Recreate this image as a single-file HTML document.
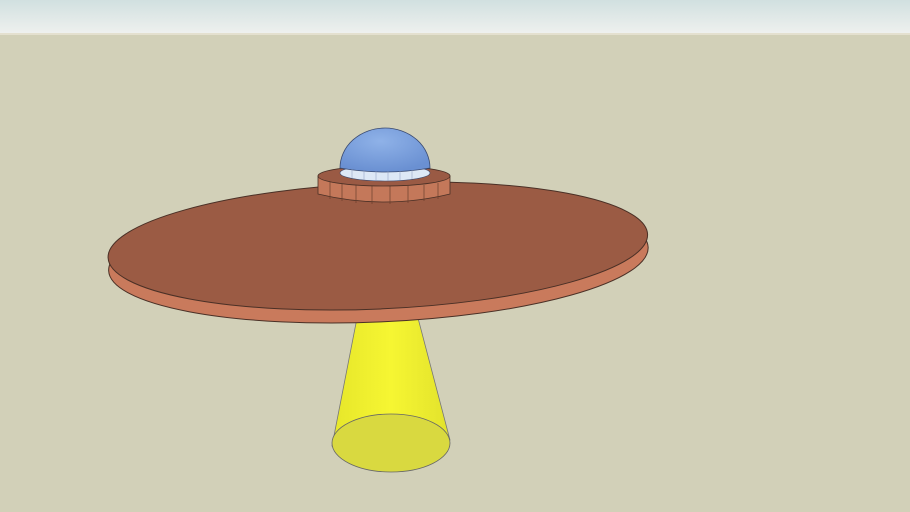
<!DOCTYPE html>
<html><head><style>
html,body{margin:0;padding:0;width:910px;height:512px;overflow:hidden;background:#d2d0b8}
svg{display:block}
</style></head><body>
<svg width="910" height="512" viewBox="0 0 910 512" xmlns="http://www.w3.org/2000/svg">
<defs>
<linearGradient id="sky" x1="0" y1="0" x2="0" y2="1">
<stop offset="0" stop-color="#d1e0e0"/><stop offset="1" stop-color="#eef0ee"/>
</linearGradient>
<linearGradient id="cone" x1="0" y1="0" x2="1" y2="0">
<stop offset="0" stop-color="#e6e62a"/><stop offset="0.5" stop-color="#f6f632"/><stop offset="1" stop-color="#e2e22c"/>
</linearGradient>
<radialGradient id="dome" cx="0.45" cy="0.3" r="0.7">
<stop offset="0" stop-color="#8fb2e8"/><stop offset="1" stop-color="#6a90d2"/>
</radialGradient>
</defs>
<rect x="0" y="0" width="910" height="33" fill="url(#sky)"/>
<rect x="0" y="33" width="910" height="2" fill="#e4e0cf"/>
<path d="M357,318 L418,318 L450,440 L332,446 Z" fill="url(#cone)" stroke="#777" stroke-width="0.8"/>
<ellipse cx="391" cy="443" rx="59" ry="29" fill="#d9d940" stroke="#666" stroke-width="0.8"/>
<g transform="rotate(-2.5 378 250)">
<ellipse cx="378" cy="259" rx="270" ry="63" fill="#c97a5c" stroke="#4a3026" stroke-width="1"/>
<ellipse cx="378" cy="246" rx="270" ry="63" fill="#9b5b44" stroke="#4a3026" stroke-width="1"/>
</g>
<path d="M318,176 L318,194 Q384,210 450,194 L450,176 Z" fill="#c4785a" stroke="#4a3026" stroke-width="0.8"/>
<g stroke="#6a3e2c" stroke-width="0.7">
<line x1="330" y1="182" x2="330" y2="199"/><line x1="342" y1="184" x2="342" y2="201"/>
<line x1="356" y1="185" x2="356" y2="203"/><line x1="372" y1="186" x2="372" y2="204"/>
<line x1="390" y1="186" x2="390" y2="204"/><line x1="408" y1="186" x2="408" y2="203"/>
<line x1="424" y1="185" x2="424" y2="201"/><line x1="438" y1="183" x2="438" y2="199"/>
</g>
<ellipse cx="384" cy="176" rx="66" ry="10" fill="#9a5a44" stroke="#4a3026" stroke-width="0.8"/>
<ellipse cx="385" cy="173" rx="45" ry="8" fill="#dde8f6" stroke="#3a4a70" stroke-width="0.6"/>
<path d="M340,168 A45,40 0 0 1 430,168 Q385,176 340,168 Z" fill="url(#dome)" stroke="#3a4a70" stroke-width="0.8"/>
<g stroke="#8a9ac0" stroke-width="0.5">
<line x1="352" y1="169" x2="352" y2="178"/><line x1="364" y1="170" x2="364" y2="180"/>
<line x1="376" y1="171" x2="376" y2="181"/><line x1="388" y1="171" x2="388" y2="181"/>
<line x1="400" y1="171" x2="400" y2="180"/><line x1="412" y1="170" x2="412" y2="179"/>
</g>
</svg>
</body></html>
